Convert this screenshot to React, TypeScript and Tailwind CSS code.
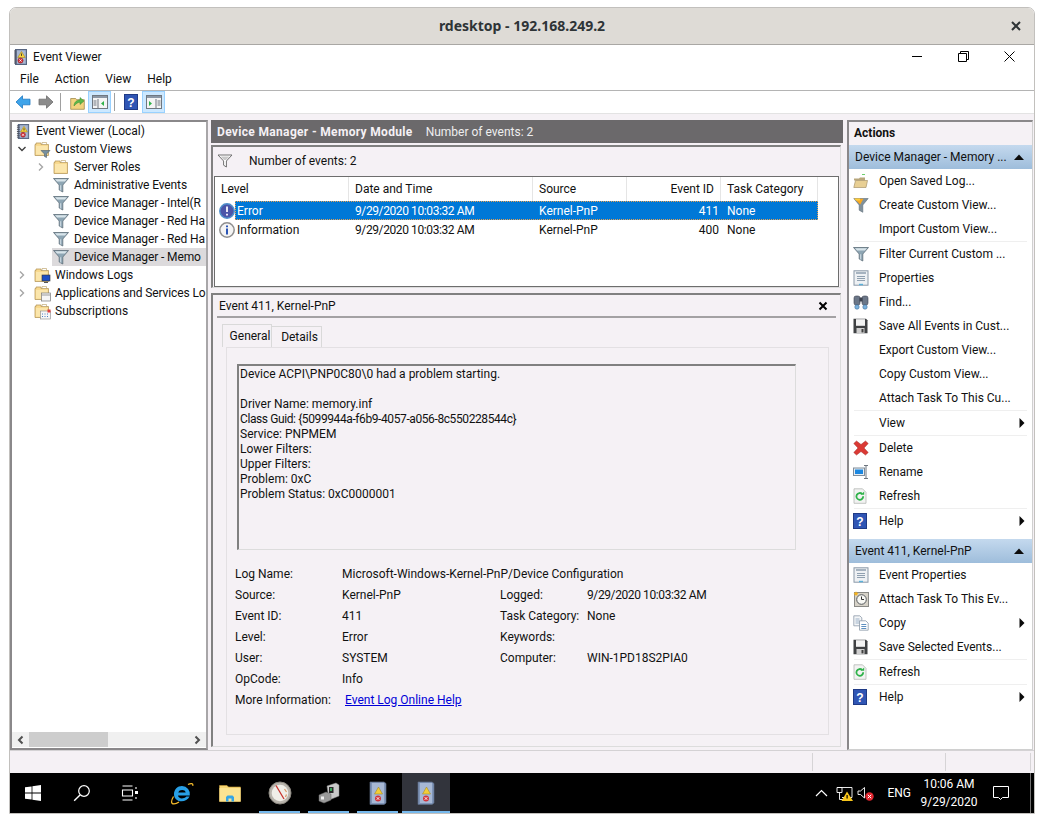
import React from "react";

const EventLog = ({ size = 16 }: { size?: number }) => (
  <svg width={size} height={size} viewBox="0 0 16 16" className="shrink-0">
    <rect x="2.5" y="0.5" width="11" height="15" fill="#7f93b5" stroke="#56647f" />
    <rect x="4" y="1.5" width="8.5" height="13" fill="#a9b8d2" />
    <path d="M1 2h3M1 4h3M1 6h3M1 8h3M1 10h3M1 12h3M1 14h3" stroke="#4a4f5c" strokeWidth="1" />
    <path d="M8.5 2.5L12.2 8.5H4.8Z" fill="#f7d23c" stroke="#a98a1a" strokeWidth=".6" />
    <rect x="8.1" y="4.5" width=".9" height="2.4" fill="#333" />
    <circle cx="7.5" cy="11.5" r="2.6" fill="#d2333b" stroke="#8c1d22" strokeWidth=".5" />
    <path d="M6.4 10.4l2.2 2.2M8.6 10.4l-2.2 2.2" stroke="#fff" strokeWidth=".8" />
  </svg>
);

const Funnel = () => (
  <svg width="16" height="16" viewBox="0 0 16 16" className="shrink-0">
    <path d="M0.5 1.5H15.5L9.8 8V15L6.2 13V8Z" fill="#8ea6b4" stroke="#5d6d78" strokeWidth=".8" />
    <path d="M2 2.2H14L12 4.5H4Z" fill="#d8e4ea" />
    <path d="M7 8.2h1.2v5.6L7 13.2Z" fill="#c5d3db" />
  </svg>
);

const Folder = ({ children }: { children?: React.ReactNode }) => (
  <svg width="17" height="17" viewBox="0 0 17 17" className="shrink-0">
    <path d="M1 3.5h1V2h5v1.5h7.5V14.5H1Z" fill="#f8d98e" stroke="#b79a5e" strokeWidth=".8" />
    <path d="M2 5h11.5v8.6H2Z" fill="#fbe6ac" />
    <path d="M8 1.5h4.5v2H8Z" fill="#fff" stroke="#b79a5e" strokeWidth=".6" />
    {children}
  </svg>
);

const HelpIcon = () => (
  <svg width="14" height="16" viewBox="0 0 14 16" className="shrink-0">
    <rect x=".5" y=".5" width="13" height="15" fill="#2f55b4" stroke="#1f3a86" />
    <text x="7" y="12.5" textAnchor="middle" fontSize="12" fontWeight="700" fill="#fff" fontFamily="Liberation Sans, sans-serif">?</text>
  </svg>
);

const FolderOpenIcon = () => (
  <svg width="16" height="16" viewBox="0 0 16 16">
    <path d="M1 5.5h5l1-1h5v3H1Z" fill="#b7a67b" />
    <path d="M2.5 7.5h12l-1.500 7H.8Z" fill="#e8cf94" stroke="#a8946a" strokeWidth=".7" />
    <path d="M9 1.500h3" stroke="#6ccf6c" />
  </svg>
);
const FunnelStar = () => (
  <svg width="16" height="16" viewBox="0 0 16 16">
    <path d="M.8 1.500h14.400L9.800 8v7.300L6.200 13.200V8Z" fill="#81919b" stroke="#5d6d78" strokeWidth=".6" />
    <path d="M1.500 1.800h9L7.200 7.500Z" fill="#f8a821" />
    <path d="M1 1.500h6v2H3Z" fill="#ffce3a" />
  </svg>
);
const PropsIcon = () => (
  <svg width="16" height="16" viewBox="0 0 16 16">
    <rect x="1" y=".8" width="14" height="14.400" fill="#eef1f4" stroke="#8b99a8" />
    <path d="M3 3h10" stroke="#a6b3c0" strokeWidth="2" />
    <path d="M4 6.500h8M4 8.500h8M4 10.500h8" stroke="#8fa0b0" />
    <path d="M6 14.500h4" stroke="#5ab0d8" strokeWidth="1.400" />
  </svg>
);
const FindIcon = () => (
  <svg width="16" height="16" viewBox="0 0 16 16">
    <rect x="1" y="2" width="6" height="9" rx="2" fill="#6b7788" stroke="#3c4350" strokeWidth=".6" />
    <rect x="9" y="2" width="6" height="9" rx="2" fill="#6b7788" stroke="#3c4350" strokeWidth=".6" />
    <rect x="6.500" y="3.500" width="3" height="4" fill="#3c4350" />
    <circle cx="4" cy="13" r="2.200" fill="#7cb2de" stroke="#3c6f9c" strokeWidth=".6" />
    <circle cx="12" cy="13" r="2.200" fill="#7cb2de" stroke="#3c6f9c" strokeWidth=".6" />
  </svg>
);
const SaveIcon = () => (
  <svg width="15" height="16" viewBox="0 0 15 16">
    <path d="M.5.800h12.500l1.500 1.500v13H.5Z" fill="#3f4143" />
    <rect x="3" y="1.200" width="9" height="6.600" fill="#f3f3f3" />
    <rect x="3.500" y="10" width="8" height="5.200" fill="#cfcfcf" />
    <rect x="8.500" y="11" width="2" height="3.400" fill="#404040" />
  </svg>
);
const DeleteIcon = () => (
  <svg width="16" height="16" viewBox="0 0 16 16">
    <path d="M.8 3.500 3.500 1 8 4.500 12.500 1 15.200 3.500 11 8 15.200 12.500 12.500 15 8 11.500 3.500 15 .8 12.500 5 8Z" fill="#db3a35" stroke="#a12925" strokeWidth=".5" />
  </svg>
);
const RenameIcon = () => (
  <svg width="16" height="16" viewBox="0 0 16 16">
    <rect x=".5" y="4" width="11" height="7.500" fill="#e7edf3" stroke="#7f8d9b" />
    <rect x="2" y="5.500" width="8" height="4.500" fill="#1b87e0" />
    <path d="M11 1.500h4M11 14.500h4M13 1.500v13" stroke="#6f7780" strokeWidth="1" fill="none" />
  </svg>
);
const RefreshIcon = () => (
  <svg width="14" height="16" viewBox="0 0 14 16">
    <path d="M1 .8h8.500l3.500 3.500v11H1Z" fill="#f2f3f2" stroke="#b4b8b4" strokeWidth=".8" />
    <path d="M10.200 8.300a3.400 3.400 0 1 1-1-2.300" fill="none" stroke="#2fb24a" strokeWidth="1.800" />
    <path d="M7.800 6.800h3.400V3.600Z" fill="#2fb24a" />
  </svg>
);
const AttachIcon = () => (
  <svg width="16" height="16" viewBox="0 0 16 16">
    <rect x="1.500" y="1.500" width="14" height="14" fill="#d6d2c8" stroke="#8a8a86" />
    <circle cx="8.500" cy="8.500" r="4.800" fill="#f8f8f4" stroke="#55595c" />
    <path d="M8.500 5.500v3h2.500" stroke="#333" fill="none" />
    <path d="M3 .2l.8 1.600 1.700.3-1.300 1.100.4 1.800L3 4.100 1.400 5l.4-1.800L.5 2.100l1.700-.3Z" fill="#f4b21f" />
  </svg>
);
const CopyIcon = () => (
  <svg width="16" height="16" viewBox="0 0 16 16">
    <path d="M.8.800h6l2 2v8H.8Z" fill="#f4f6f8" stroke="#8b99a8" strokeWidth=".8" />
    <path d="M2.500 4h4M2.500 6h4M2.500 8h4" stroke="#9cb1c7" />
    <path d="M6.500 5.800h6.300l2.400 2.400v7H6.500Z" fill="#fff" stroke="#8b99a8" strokeWidth=".8" />
    <path d="M8.300 9.500h5M8.300 11.500h5M8.300 13.500h5" stroke="#5f90c0" />
  </svg>
);

const Tri = () => (
  <svg width="12" height="7" viewBox="0 0 12 7" className="shrink-0"><path d="M6 .5 11 6H1Z" fill="#0c0c0c" /></svg>
);
const Sub = () => (
  <svg width="6" height="10" viewBox="0 0 6 10" className="shrink-0"><path d="M.5 0 5.500 5 .5 10Z" fill="#0a0a0a" /></svg>
);

type Action = { t: string; i?: React.ReactNode; sub?: boolean; sep?: boolean };

const actionsA: Action[] = [
  { t: "Open Saved Log...", i: <FolderOpenIcon /> },
  { t: "Create Custom View...", i: <FunnelStar /> },
  { t: "Import Custom View...", sep: true },
  { t: "Filter Current Custom ...", i: <Funnel /> },
  { t: "Properties", i: <PropsIcon /> },
  { t: "Find...", i: <FindIcon /> },
  { t: "Save All Events in Cust...", i: <SaveIcon /> },
  { t: "Export Custom View..." },
  { t: "Copy Custom View..." },
  { t: "Attach Task To This Cu...", sep: true },
  { t: "View", sub: true, sep: true },
  { t: "Delete", i: <DeleteIcon /> },
  { t: "Rename", i: <RenameIcon /> },
  { t: "Refresh", i: <RefreshIcon />, sep: true },
  { t: "Help", i: <HelpIcon />, sub: true },
];
const actionsB: Action[] = [
  { t: "Event Properties", i: <PropsIcon /> },
  { t: "Attach Task To This Ev...", i: <AttachIcon /> },
  { t: "Copy", i: <CopyIcon />, sub: true },
  { t: "Save Selected Events...", i: <SaveIcon />, sep: true },
  { t: "Refresh", i: <RefreshIcon />, sep: true },
  { t: "Help", i: <HelpIcon />, sub: true },
];

const ActionRows = ({ items }: { items: Action[] }) => (
  <div>
    {items.map((a) => (
      <div key={a.t}>
        <div className="flex h-6 items-center pl-[4px] pr-[7px]">
          <span className="flex w-[26px] shrink-0 items-center">{a.i}</span>
          <span className="flex-1 whitespace-nowrap">{a.t}</span>
          {a.sub && <Sub />}
        </div>
        {a.sep && <div className="mx-[5px] h-px bg-[#efefef]" />}
      </div>
    ))}
  </div>
);

const ActionHead = ({ t }: { t: string }) => (
  <div className="flex h-6 items-center justify-between bg-gradient-to-b from-[#c4d9ee] to-[#9ebddb] pl-[6px] pr-[7px]">
    <span className="whitespace-nowrap">{t}</span>
    <Tri />
  </div>
);

const Chev = ({ open, dim }: { open?: boolean; dim?: boolean }) => (
  <svg width="10" height="10" viewBox="0 0 10 10" className="shrink-0">
    <path d={open ? "M1.500 3 5 6.500 8.500 3" : "M3 1.500 6.500 5 3 8.500"} fill="none" stroke={dim ? "#a6a6a6" : open ? "#404040" : "#a6a6a6"} strokeWidth="1.400" />
  </svg>
);

const treeL2 = ["Administrative Events", "Device Manager - Intel(R", "Device Manager - Red Ha", "Device Manager - Red Ha", "Device Manager - Memo"];

const TreeLeft = () => (
  <div className="flex min-h-0 flex-1 flex-col overflow-hidden pl-[3px]">
    <div className="flex h-[18px] items-center gap-[5px] pl-[1px]">
      <EventLog size={15} />
      <span className="whitespace-nowrap">Event Viewer (Local)</span>
    </div>
    <div className="flex h-[18px] items-center pl-[2px]">
      <span className="w-[17px] shrink-0"><Chev open /></span>
      <Folder>
        <path d="M7 9.500h9l-3.500 3.500v3.500l-2-1V13Z" fill="#77909f" stroke="#4e5c66" strokeWidth=".6" />
      </Folder>
      <span className="ml-[4px] whitespace-nowrap">Custom Views</span>
    </div>
    <div className="flex h-[18px] items-center pl-[21px]">
      <span className="w-[17px] shrink-0"><Chev dim /></span>
      <Folder />
      <span className="ml-[4px] whitespace-nowrap">Server Roles</span>
    </div>
    {treeL2.map((t, i) => (
      <div key={t + i} className="flex h-[18px] items-center overflow-hidden pl-[37px]">
        <div className={`flex h-[18px] flex-1 items-center overflow-hidden pl-[1px] ${i === 4 ? "bg-[#dcdadc]" : ""}`}>
          <Funnel />
          <span className="ml-[5px] whitespace-nowrap tracking-[-0.12px]">{t}</span>
        </div>
      </div>
    ))}
    <div className="flex h-[18px] items-center overflow-hidden pl-[2px]">
      <span className="w-[17px] shrink-0"><Chev dim /></span>
      <Folder>
        <rect x="8" y="8" width="8" height="6" fill="#1d4fc4" stroke="#333" strokeWidth=".6" />
        <path d="M10 15.500h4" stroke="#555" />
      </Folder>
      <span className="ml-[4px] whitespace-nowrap">Windows Logs</span>
    </div>
    <div className="flex h-[18px] items-center overflow-hidden pl-[2px]">
      <span className="w-[17px] shrink-0"><Chev dim /></span>
      <Folder>
        <rect x="7.500" y="8" width="9" height="8" fill="#f6f6f6" stroke="#777" strokeWidth=".7" />
        <path d="M8 10h8" stroke="#9a9a9a" />
      </Folder>
      <span className="ml-[4px] whitespace-nowrap tracking-[-0.12px]">Applications and Services Lo</span>
    </div>
    <div className="flex h-[18px] items-center overflow-hidden pl-[19px]">
      <Folder>
        <rect x="6.500" y="8" width="10" height="8" fill="#f6f6f6" stroke="#888" strokeWidth=".6" />
        <path d="M8 11h1M10.500 11h1M13 11h1M8 13.500h1M10.500 13.500h1M13 13.500h1" stroke="#4a7fc0" />
        <rect x="13.500" y="6.500" width="3" height="3" fill="#e03a3a" />
      </Folder>
      <span className="ml-[4px] whitespace-nowrap">Subscriptions</span>
    </div>
  </div>
);

const HScroll = () => (
  <div className="mb-[1px] flex h-[15px] items-center bg-[#f0f0f0]">
    <span className="flex w-[17px] justify-center">
      <svg width="7" height="10" viewBox="0 0 7 10"><path d="M5.500 1.500 2 5l3.500 3.500" fill="none" stroke="#505050" strokeWidth="2" /></svg>
    </span>
    <div className="h-[15px] w-[79px] bg-[#cdcdcd]" />
    <div className="flex-1" />
    <span className="flex w-[17px] justify-center">
      <svg width="7" height="10" viewBox="0 0 7 10"><path d="M1.500 1.500 5 5 1.500 8.500" fill="none" stroke="#505050" strokeWidth="2" /></svg>
    </span>
  </div>
);

const InfoDot = ({ err }: { err?: boolean }) => (
  <svg width="16" height="16" viewBox="0 0 16 16" className="shrink-0">
    <circle cx="8" cy="8" r="7.200" fill={err ? "#4b55a8" : "#f4f4f4"} stroke={err ? "#4f8fca" : "#8f8f8f"} strokeWidth="1.500" />
    {err ? (
      <path d="M8 3.500v5.500M8 10.800v1.800" stroke="#e8e8f6" strokeWidth="2" />
    ) : (
      <path d="M8 3.400v1.800M8 6.600v6" stroke="#2a55b5" strokeWidth="2" />
    )}
  </svg>
);

const Row = ({ sel, level, id }: { sel?: boolean; level: string; id: string }) => (
  <div className="flex h-[19px] w-[603px] items-center">
    <span className="flex w-[20px] shrink-0 items-center pl-[4px]"><InfoDot err={sel} /></span>
    <div className={`flex h-[19px] flex-1 items-center ${sel ? "border border-dotted border-[#e8a050] bg-[#0078d7] text-white" : "border border-transparent"}`}>
      <span className="w-[114px] shrink-0 pl-[1px]">{level}</span>
      <span className="w-[184px] shrink-0 whitespace-nowrap pl-[5px] tracking-[-0.4px]">9/29/2020 10:03:32 AM</span>
      <span className="w-[94px] shrink-0 pl-[5px]">Kernel-PnP</span>
      <span className="w-[91px] shrink-0 text-right">{id}</span>
      <span className="pl-[8px]">None</span>
    </div>
  </div>
);

const Th = ({ w, right, children }: { w: string; right?: boolean; children: React.ReactNode }) => (
  <div className={`flex h-full items-center border-r border-[#e5e5e5] px-[6px] ${w} ${right ? "justify-end" : ""}`}>{children}</div>
);

const TopPanel = () => (
  <div className="mt-[2px] flex h-[143px] w-[630px] flex-col border-t-2 border-l-2 border-r border-b border-t-[#808080] border-l-[#808080] border-r-[#dcdcdc] border-b-[#dcdcdc]">
    <div className="flex h-[29px] shrink-0 items-center pb-[2px] pl-[4px]">
      <svg width="16" height="14" viewBox="0 0 16 14" className="shrink-0">
        <path d="M1 1h14L9.400 7v6l-2.800-1.800V7Z" fill="#fff" stroke="#707070" />
        <path d="M3.500 2.500h9L9 6H7Z" fill="#c9c9c9" />
      </svg>
      <span className="ml-[16px]">Number of events: 2</span>
    </div>
    <div className="ml-[1px] flex h-[111px] w-[625px] flex-col border border-[#6d6d6d] bg-white">
      <div className="flex h-[24px] w-[603px] shrink-0 items-center">
        <Th w="w-[134px]">Level</Th>
        <Th w="w-[184px]">Date and Time</Th>
        <Th w="w-[94px]">Source</Th>
        <Th w="w-[94px]" right>Event ID</Th>
        <Th w="w-[97px]">Task Category</Th>
      </div>
      <Row sel level="Error" id="411" />
      <Row level="Information" id="400" />
    </div>
  </div>
);

const Field = ({ children }: { children?: React.ReactNode }) => <span className="whitespace-nowrap">{children}</span>;

const DetailPanel = () => (
  <div className="mt-[5px] flex h-[454px] w-[630px] flex-col border-t-2 border-l-2 border-r border-b border-t-[#808080] border-l-[#808080] border-r-[#dcdcdc] border-b-[#dcdcdc] px-[4px]">
    <div className="flex h-[21px] shrink-0 items-center justify-between pr-[8px] pl-[2px]">
      <span>Event 411, Kernel-PnP</span>
      <svg width="10" height="10" viewBox="0 0 10 10"><path d="M1.500 1.500l7 7M8.500 1.500l-7 7" stroke="#000" strokeWidth="2" /></svg>
    </div>
    <div className="h-[2px] w-[619px] shrink-0 bg-[#a3a1a3]" />
    <div className="mt-[6px] flex h-[23px] shrink-0 items-end pl-[5px]">
      <div className="flex h-[23px] w-[50px] items-center justify-center border-t border-l border-r border-[#d9d9d9] bg-[#f5f1f5] pb-[1px] pl-[6px]">General</div>
      <div className="flex h-[21px] w-[50px] items-center justify-center border-t border-r border-[#d9d9d9] pl-[6px]">Details</div>
    </div>
    <div className="ml-[9px] flex h-[388px] w-[603px] flex-col border border-[#e3e0e3] pt-[16px] pl-[8px]">
      <div className="ml-[2px] flex h-[186px] w-[559px] shrink-0 flex-col border-t-2 border-l-2 border-r border-b border-t-[#808080] border-l-[#808080] border-r-[#dcdcdc] border-b-[#dcdcdc] pt-[1px] pl-[1px] leading-[15px]">
        <div>Device ACPI\PNP0C80\0 had a problem starting.</div>
        <div className="h-[15px]" />
        <div>Driver Name: memory.inf</div>
        <div className="tracking-[-0.4px]">Class Guid: {"{5099944a-f6b9-4057-a056-8c550228544c}"}</div>
        <div>Service: PNPMEM</div>
        <div>Lower Filters:</div>
        <div>Upper Filters:</div>
        <div>Problem: 0xC</div>
        <div>Problem Status: 0xC0000001</div>
      </div>
      <div className="mt-[13px] grid grid-cols-[107px_158px_87px_1fr] auto-rows-[21px] items-center">
        <Field>Log Name:</Field>
        <div className="col-span-3 whitespace-nowrap">Microsoft-Windows-Kernel-PnP/Device Configuration</div>
        <Field>Source:</Field><Field>Kernel-PnP</Field><Field>Logged:</Field><span className="whitespace-nowrap tracking-[-0.4px]">9/29/2020 10:03:32 AM</span>
        <Field>Event ID:</Field><Field>411</Field><Field>Task Category:</Field><Field>None</Field>
        <Field>Level:</Field><Field>Error</Field><Field>Keywords:</Field><Field />
        <Field>User:</Field><Field>SYSTEM</Field><Field>Computer:</Field><Field>WIN-1PD18S2PIA0</Field>
        <Field>OpCode:</Field><div className="col-span-3">Info</div>
        <Field>More Information:</Field>
        <div className="col-span-3 pl-[3px]"><span className="text-[#0000d8] underline">Event Log Online Help</span></div>
      </div>
    </div>
  </div>
);

const PaneToggle = ({ right }: { right?: boolean }) => (
  <div className="flex h-[22px] w-[23px] items-center justify-center border border-[#99d1ff] bg-[#cce8ff]">
    <svg width="16" height="14" viewBox="0 0 16 14">
      <rect x=".5" y=".5" width="15" height="13" fill="#f4f4f4" stroke="#6f7780" />
      <rect x="1" y="1" width="14" height="2" fill="#8b97a5" />
      {right ? (
        <>
          <path d="M3 6l3 2.500L3 11Z" fill="#2fb24a" />
          <path d="M10 4v9M11.500 6h3M11.500 8h3M11.500 10h3" stroke="#6f7780" />
        </>
      ) : (
        <>
          <path d="M6 4v9M1.500 6h3M1.500 8h3M1.500 10h3" stroke="#6f7780" />
          <path d="M12 6L9 8.500 12 11Z" fill="#2fb24a" />
        </>
      )}
    </svg>
  </div>
);

const ToolSep = () => <div className="h-[18px] w-px bg-[#a0a0a0]" />;

const Toolbar = () => (
  <div className="flex h-[22px] shrink-0 items-center border-0 bg-white pl-[5px]">
    <svg width="16" height="14" viewBox="0 0 16 14" className="shrink-0">
      <path d="M7.500.8 1 7l6.500 6.200V9.800H15V4.200H7.500Z" fill="#3ea4ea" stroke="#1e78c2" strokeWidth=".8" />
    </svg>
    <svg width="16" height="14" viewBox="0 0 16 14" className="ml-[7px] shrink-0">
      <path d="M8.500.8 15 7l-6.500 6.200V9.800H1V4.200h7.500Z" fill="#8c8c8c" stroke="#6c6c6c" strokeWidth=".8" />
    </svg>
    <div className="ml-[6px]"><ToolSep /></div>
    <svg width="15" height="15" viewBox="0 0 15 15" className="ml-[9px] shrink-0">
      <path d="M.7 3.500h5l1 1.200h7.600v9.600H.7Z" fill="#f2d27e" stroke="#a08a4e" strokeWidth=".8" />
      <path d="M4 11c0-4 3-6 6-6V2.500l4 3.500-4 3.500V7.200c-2 0-4 1.400-6 3.800Z" fill="#5db84a" stroke="#3a8a32" strokeWidth=".5" />
    </svg>
    <div className="ml-[3px]"><PaneToggle /></div>
    <div className="ml-[3px]"><ToolSep /></div>
    <div className="ml-[9px]"><HelpIcon /></div>
    <div className="ml-[4px]"><PaneToggle right /></div>
  </div>
);

const EvBig = () => (
  <svg width="18" height="24" viewBox="0 0 18 24">
    <path d="M1 1h14l2 1.500V22l-2 1.500H1Z" fill="#7e94b8" stroke="#5c6a82" strokeWidth=".7" />
    <path d="M3 2h12v20H3Z" fill="#a7b8d4" />
    <path d="M9.500 6 13.500 13H5.500Z" fill="#f2cd38" stroke="#9a7f1d" strokeWidth=".5" />
    <circle cx="9" cy="17.500" r="3" fill="#d2333b" />
    <path d="M7.700 16.200l2.600 2.600M10.300 16.200l-2.600 2.600" stroke="#fff" strokeWidth=".9" />
  </svg>
);

const Item = ({ children, on, active, w = "w-[49px]" }: { children: React.ReactNode; on?: boolean; active?: boolean; w?: string }) => (
  <div className={`relative flex h-10 ${w} shrink-0 items-center justify-center ${active ? "bg-[#32343c]" : ""}`}>
    {children}
    {on && <div className={`absolute bottom-0 h-[2px] bg-[#76b9ed] ${active ? "left-0 right-0" : "left-[4px] right-[4px]"}`} />}
  </div>
);

const Taskbar = () => (
  <div className="flex h-10 shrink-0 items-center bg-black text-white">
    <Item>
      <svg width="16" height="16" viewBox="0 0 16 16" className="-translate-x-[2px]"><path d="M0 2.300 6.600 1.400V7.600H0ZM7.400 1.300 16 0V7.600H7.400ZM0 8.400H6.600V14.600L0 13.700ZM7.400 8.400H16V16L7.400 14.700Z" fill="#fff" /></svg>
    </Item>
    <Item>
      <svg width="18" height="18" viewBox="0 0 18 18" className="-translate-x-[2px]"><circle cx="11" cy="7" r="5.300" fill="none" stroke="#fff" strokeWidth="1.200" /><path d="M7 11 1.200 16.800" stroke="#fff" strokeWidth="1.400" /></svg>
    </Item>
    <Item>
      <svg width="18" height="16" viewBox="0 0 18 16" className="-translate-x-[3px]"><path d="M1.500 1h10M1.500 15h10M1.500 5h10v6h-10ZM15 2v2M15 12v2" stroke="#fff" fill="none" strokeWidth="1.100" /><rect x="14" y="6" width="3" height="3" fill="#fff" /></svg>
    </Item>
    <Item>
      <svg width="24" height="24" viewBox="0 0 24 24">
        <path d="M12 5a8 8 0 0 1 7.800 9.500H8c.4 2.800 4.600 4.400 8.400 1h3.200C16.500 22.400 4 22 4 13.200 4 8.500 7.500 5 12 5Zm3.700 6.500C15.400 8.200 9 8.200 8.300 11.500Z" fill="#28a0e6" />
        <path d="M18 3.500c3.500-1.800 5.300-.8 4.800 1.400M3.500 15.500C.8 20 .8 23 4 22.800c1.500 0 3.500-.8 5-1.800" fill="none" stroke="#f2b92b" strokeWidth="1.300" />
      </svg>
    </Item>
    <Item>
      <svg width="22" height="20" viewBox="0 0 22 20" className="-translate-x-[1px]">
        <path d="M.5 2.500H8l1.500 1.500H21.500V18.500H.5Z" fill="#f7d673" stroke="#c79d3a" strokeWidth=".6" />
        <path d="M.5 5h21v13.500H.5Z" fill="#fbe392" />
        <path d="M7 18.500v-4.500L8.500 12.500H13.500L15 14v4.500H12.500V15.500H9.500V18.500Z" fill="#35a5e6" />
      </svg>
    </Item>
    <Item on>
      <svg width="24" height="24" viewBox="0 0 24 24">
        <circle cx="12" cy="12" r="11" fill="#b8b4ac" stroke="#8b8780" />
        <circle cx="12" cy="12" r="8.300" fill="#f0eee8" />
        <path d="M8 4.500 16 18" stroke="#c8322c" strokeWidth="1.300" />
        <path d="M16.500 8 18.500 11M18.500 13.500 17.500 16" stroke="#d69464" strokeWidth="1.200" />
      </svg>
    </Item>
    <Item on>
      <svg width="22" height="22" viewBox="0 0 22 22">
        <path d="M9 4 18 1 21 3V14L11 18Z" fill="#c9c9c9" stroke="#8a8a8a" strokeWidth=".5" />
        <rect x="11" y="5" width="4.500" height="6" fill="#2a2a2a" />
        <rect x="12" y="6" width="2" height="3" fill="#3aa55a" />
        <path d="M1 13 8 10 13 12V18L6 21 1 19Z" fill="#9a9a9a" stroke="#666" strokeWidth=".5" />
        <rect x="3" y="14.500" width="3" height="3" fill="#efefef" />
      </svg>
    </Item>
    <Item on><EvBig /></Item>
    <Item on active w="w-[48px]"><EvBig /></Item>
    <div className="flex-1" />
    <svg width="13" height="8" viewBox="0 0 13 8" className="shrink-0"><path d="M1 7 6.500 1.500 12 7" fill="none" stroke="#fff" strokeWidth="1.200" /></svg>
    <svg width="17" height="15" viewBox="0 0 17 15" className="ml-[8px] shrink-0">
      <path d="M1 1.500h15v10H6M1 1.500h5v5H1ZM3.500 6.500v7H8" fill="none" stroke="#fff" strokeWidth=".9" />
      <path d="M11 5.500 17 15H5.500Z" fill="#f7c51c" />
      <rect x="10.500" y="9" width="1.200" height="3.500" fill="#000" />
    </svg>
    <svg width="17" height="15" viewBox="0 0 17 15" className="ml-[4px] shrink-0">
      <path d="M1 5h2.500L7.500 1.500v10.500L3.500 8.500H1Z" fill="none" stroke="#fff" strokeWidth=".9" />
      <circle cx="12.500" cy="10.500" r="4.200" fill="#e0252e" />
      <path d="M10.800 8.800l3.400 3.400M14.200 8.800l-3.400 3.400" stroke="#fff" strokeWidth="1" />
    </svg>
    <span className="ml-[13px] whitespace-nowrap">ENG</span>
    <div className="ml-[8px] flex w-[60px] flex-col items-center leading-[18px] whitespace-nowrap">
      <span>10:06 AM</span>
      <span>9/29/2020</span>
    </div>
    <svg width="16" height="16" viewBox="0 0 16 16" className="ml-[14px] shrink-0">
      <path d="M.5 1.500h15v11H9.500L7.500 14.500 5.500 12.500H.5Z" fill="none" stroke="#fff" strokeWidth="1" />
    </svg>
    <div className="ml-[21px] h-full w-px bg-[#707070]" />
    <div className="w-[3px]" />
  </div>
);

export default function App() {
  return (
    <div className="h-[823px] w-[1044px] overflow-hidden bg-white pt-[7px] pl-[9px] font-[Roboto,sans-serif] text-xs text-[#111111]">
      <div className="flex h-[807px] w-[1026px] flex-col overflow-hidden rounded-t-[7px] border border-[#c2c0bd]">
        <div className="relative flex h-[37px] shrink-0 items-center justify-center border-b border-[#a9a7a4] bg-[#dedbd6]">
          <span className="font-['Noto_Sans',sans-serif] text-sm font-bold text-[#2e3436]">rdesktop - 192.168.249.2</span>
          <svg width="10" height="10" viewBox="0 0 10 10" className="absolute right-[13px] top-[13px]"><path d="M1 1l8 8M9 1l-8 8" stroke="#2e3436" strokeWidth="2" /></svg>
        </div>
        <div className="flex h-[23px] shrink-0 items-center bg-white pl-[3px]">
          <EventLog />
          <span className="ml-[4px]">Event Viewer</span>
          <div className="flex-1" />
          <div className="flex w-[46px] justify-center"><div className="h-px w-[10px] bg-black" /></div>
          <div className="flex w-[46px] justify-center">
            <svg width="11" height="11" viewBox="0 0 11 11"><path d="M.5 2.500h8v8h-8ZM2.500 2.500v-2h8v8h-2" fill="none" stroke="#000" /></svg>
          </div>
          <div className="mr-[2px] flex w-[46px] justify-center">
            <svg width="11" height="11" viewBox="0 0 11 11"><path d="M.5.500l10 10M10.500.500l-10 10" fill="none" stroke="#000" /></svg>
          </div>
        </div>
        <div className="flex h-[23px] shrink-0 items-center gap-4 border-b border-[#b4b4b4] bg-white pl-[10px]">
          <span>File</span><span>Action</span><span>View</span><span>Help</span>
        </div>
        <Toolbar />
        <div className="flex min-h-0 flex-1 border-t border-[#e3e3e3] bg-[#f5f1f5] pt-[6px]">
          <div className="flex h-[630px] w-[198px] shrink-0 flex-col border-2 border-[#8a888a] border-r-[#a8a6a8] bg-white">
            <TreeLeft />
            <HScroll />
          </div>
          <div className="ml-[3px] flex w-[632px] shrink-0 flex-col">
            <div className="flex h-[23px] shrink-0 items-center bg-[#6b696b] pl-[6px] text-[#f5f1f5]">
              <span className="font-bold tracking-[0.33px]">Device Manager - Memory Module</span>
              <span className="ml-[13px] text-[#eeeeee]">Number of events: 2</span>
            </div>
            <TopPanel />
            <DetailPanel />
          </div>
          <div className="ml-[4px] flex h-[630px] w-[186px] shrink-0 flex-col border-t-2 border-l-2 border-r border-b border-t-[#8a888a] border-l-[#8a888a] border-r-[#d0d0d0] border-b-[#d0d0d0] bg-white">
            <div className="flex h-[23px] shrink-0 items-center bg-[#f5f1f5] pb-[2px] pl-[5px] font-bold">Actions</div>
            <ActionHead t="Device Manager - Memory ..." />
            <ActionRows items={actionsA} />
            <div className="mt-[6px]"><ActionHead t="Event 411, Kernel-PnP" /></div>
            <ActionRows items={actionsB} />
          </div>
        </div>
        <div className="flex h-[23px] shrink-0 items-stretch border-t border-[#d4d2d4] bg-[#f5f1f5] py-[2px]">
          <div className="w-[803px] border-r border-[#d6d4d6]" />
          <div className="w-[133px] border-r border-[#d6d4d6]" />
          <div className="w-[85px] border-r border-[#d6d4d6]" />
        </div>
        <Taskbar />
      </div>
    </div>
  );
}
